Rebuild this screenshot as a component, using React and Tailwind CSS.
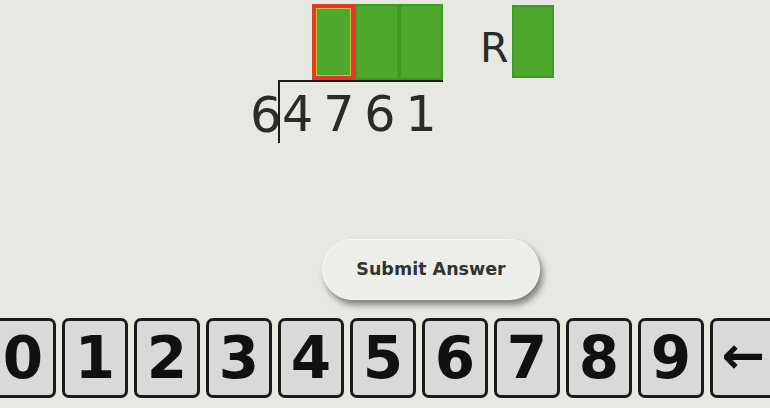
import React from 'react';

const KEYS = ['0', '1', '2', '3', '4', '5', '6', '7', '8', '9', '←'];

function AnswerBox({ active }) {
  if (active) {
    return (
      <div className="w-[43px] h-[76px] bg-[#e23a2a] p-[4px]">
        <div className="w-full h-full bg-[#4ea82e] border border-[#c9c23a]" />
      </div>
    );
  }
  return <div className="w-[44px] h-[76px] bg-[#4ea82e] border-[2px] border-[#3f9a22]" />;
}

export default function App() {
  return (
    <div
      className="w-[770px] h-[408px] overflow-hidden bg-[#e8e8e3] flex flex-col"
      style={{ fontFamily: '"DejaVu Sans", Verdana, sans-serif' }}
    >
      {/* long division */}
      <div className="flex items-start pl-[250px] pt-[4px]">
        <div className="flex flex-col">
          <div className="flex justify-end">
            <AnswerBox active />
            <AnswerBox />
            <AnswerBox />
          </div>
          <div className="flex">
            <span className="w-[28px] text-[50px] leading-[60px] mt-[5px] text-[#2b2b2b]">6</span>
            <div className="w-[165px] h-[63px] border-l-2 border-t-2 border-[#1e1e1e] flex items-start">
              <span className="text-[49px] leading-[60px] mt-[3px] ml-[2px] tracking-[10px] text-[#2b2b2b]">4761</span>
            </div>
          </div>
        </div>
        <span className="ml-[37px] mt-[20px] text-[41px] leading-[48px] text-[#2b2b2b]">R</span>
        <div className="ml-[3px] mt-[1px] w-[42px] h-[73px] bg-[#4ea82e] border-[2px] border-[#3f9a22]" />
      </div>

      {/* submit */}
      <div className="flex justify-center pl-[92px] mt-[94px]">
        <button className="w-[218px] h-[61px] rounded-full bg-[#ededea] border border-[#f7f7f5] shadow-[3px_5px_6px_rgba(0,0,0,0.45)] text-[17.5px] font-bold text-[#333]">
          Submit Answer
        </button>
      </div>

      {/* keypad */}
      <div className="flex gap-[6px] ml-[-10px] mt-[18px]">
        {KEYS.map((k) => (
          <div
            key={k}
            className="shrink-0 w-[66px] h-[80px] rounded-[7px] border-[3px] border-[#1a1a1a] bg-[#d9d9d7] flex items-center justify-center"
          >
            {k === '←' ? (
              <span className="text-[52px] font-bold leading-none text-[#111] -mt-[6px]">←</span>
            ) : (
              <span className="text-[58px] font-bold leading-none text-[#111]">{k}</span>
            )}
          </div>
        ))}
      </div>
    </div>
  );
}
